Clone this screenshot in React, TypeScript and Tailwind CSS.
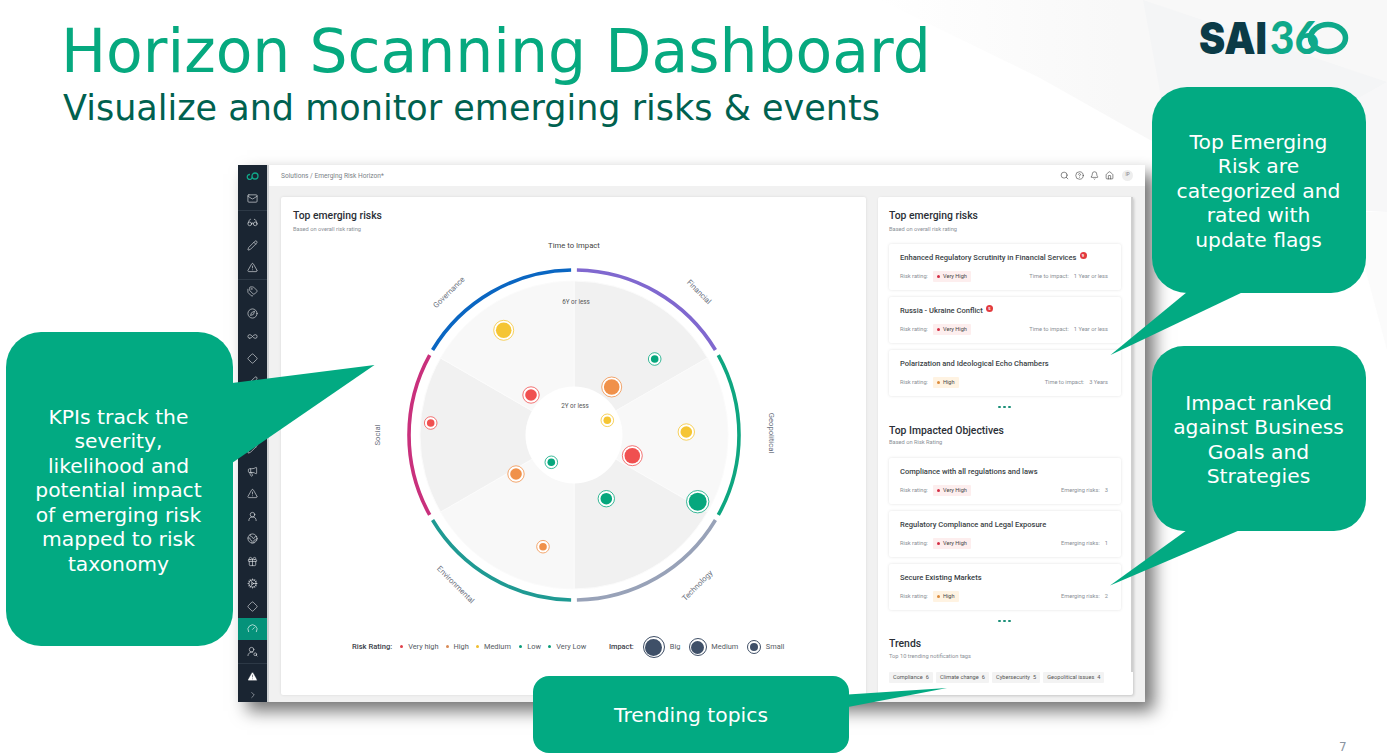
import React from "react";
import {
  Mail, Glasses, Pencil, TriangleAlert, Tags, Compass, Infinity as InfinityIcon, Diamond, Megaphone, UserRound, Earth, Gift, Cog, Gauge, UserRoundSearch, ChevronRight, Search, CircleHelp, Bell, House, PenLine, ShieldCheck, Flag,
} from "lucide-react";

const GREEN = "#02aa82";

function polar(r: number, deg: number) {
  const a = ((deg - 90) * Math.PI) / 180;
  return [210 + r * Math.cos(a), 195 + r * Math.sin(a)];
}
function arc(r: number, a: number, b: number) {
  const [x1, y1] = polar(r, a);
  const [x2, y2] = polar(r, b);
  return `M${x1} ${y1}A${r} ${r} 0 0 1 ${x2} ${y2}`;
}
function sector(r: number, a: number, b: number) {
  const [x1, y1] = polar(r, a);
  const [x2, y2] = polar(r, b);
  return `M210 195L${x1} ${y1}A${r} ${r} 0 0 1 ${x2} ${y2}Z`;
}

const rings = [
  { a: 1, b: 59, c: "#8068cf" },
  { a: 61, b: 119, c: "#0ea680" },
  { a: 121, b: 179, c: "#98a2b8" },
  { a: 181, b: 239, c: "#1f9a93" },
  { a: 241, b: 299, c: "#c9307c" },
  { a: 301, b: 359, c: "#0a66c2" },
];
const RED = "#f05050";
const ORANGE = "#f0914a";
const YELLOW = "#f5c533";
const TEAL = "#06a77d";
const dots = [
  { x: 502.7, y: 330.3, r: 10, c: 7.8, f: YELLOW },
  { x: 653.7, y: 359, r: 6.3, c: 3.8, f: TEAL },
  { x: 610.7, y: 387, r: 10, c: 7.8, f: ORANGE },
  { x: 530, y: 395, r: 8.2, c: 5.8, f: RED },
  { x: 606.3, y: 420.3, r: 6.3, c: 3.8, f: YELLOW },
  { x: 685.3, y: 432, r: 8.2, c: 5.8, f: YELLOW },
  { x: 429.7, y: 423, r: 6.3, c: 3.8, f: RED },
  { x: 631.3, y: 455.7, r: 10, c: 7.8, f: RED },
  { x: 515, y: 474, r: 8.2, c: 5.8, f: ORANGE },
  { x: 550.3, y: 462.3, r: 6.3, c: 3.8, f: TEAL },
  { x: 605.3, y: 498.7, r: 8.2, c: 5.8, f: TEAL },
  { x: 696.7, y: 501.7, r: 11.2, c: 9, f: TEAL },
  { x: 542, y: 546.7, r: 6.3, c: 3.8, f: ORANGE },
];
const labels = [
  { t: "Governance", x: 448.3, y: 292.7, rot: -45 },
  { t: "Financial", x: 697.7, y: 292.3, rot: 45 },
  { t: "Geopolitical", x: 770, y: 433, rot: 90 },
  { t: "Technology", x: 696.7, y: 586, rot: -45 },
  { t: "Environmental", x: 454.3, y: 585, rot: 45 },
  { t: "Social", x: 377, y: 435, rot: -90 },
];

function Wheel() {
  return (
    <svg width="420" height="390" viewBox="0 0 420 390" className="mx-auto block shrink-0" style={{ fontFamily: "Roboto, sans-serif" }}>
      <text x="210" y="8" textAnchor="middle" fontSize="7.7" fill="#444">Time to Impact</text>
      {rings.map((s, i) => (
        <path key={"s" + i} d={sector(154, s.a - 1, s.b + 1)} fill={i % 2 === 0 ? "#f1f1f1" : "#f8f8f8"} stroke="#fbfbfb" strokeWidth="1" />
      ))}
      <circle cx="210" cy="195" r="48.5" fill="#ffffff" />
      {rings.map((s) => (
        <path key={s.c} d={arc(165, s.a, s.b)} fill="none" stroke={s.c} strokeWidth="3.6" />
      ))}
      <text x="212" y="63.5" textAnchor="middle" fontSize="6.3" fill="#555">6Y or less</text>
      <text x="211" y="167.5" textAnchor="middle" fontSize="6.3" fill="#555">2Y or less</text>
      {labels.map((l) => (
        <text key={l.t} transform={`translate(${l.x - 363} ${l.y - 240}) rotate(${l.rot})`} textAnchor="middle" dominantBaseline="middle" fontSize="7.7" fill="#6b7280">{l.t}</text>
      ))}
      {dots.map((d, i) => (
        <g key={i}>
          <circle cx={d.x - 363} cy={d.y - 240} r={d.r} fill="#fff" stroke={d.f} strokeWidth="0.8" />
          <circle cx={d.x - 363} cy={d.y - 240} r={d.c} fill={d.f} />
        </g>
      ))}
    </svg>
  );
}

function LegendDot({ color, label, cls }: { color: string; label: string; cls: string }) {
  return (
    <span className={`flex items-center gap-[4.8px] ${cls}`}>
      <span className="h-[3px] w-[3px] rounded-full" style={{ background: color }} />
      <span>{label}</span>
    </span>
  );
}

function ImpactDot({ outer, inner }: { outer: number; inner: number }) {
  return (
    <span className="flex items-center justify-center rounded-full border border-[#3f4f66] bg-white" style={{ width: outer, height: outer }}>
      <span className="block rounded-full bg-[#3f5068]" style={{ width: inner, height: inner }} />
    </span>
  );
}

function Legend() {
  return (
    <div className="mt-[6px] flex h-[22px] items-center pl-[71px] text-[7.4px] text-[#555b63]">
      <span className="mr-[8px] text-[7.6px] font-medium text-[#3c4149]">Risk Rating:</span>
      <LegendDot color="#e0404a" label="Very high" cls="mr-[7px]" />
      <LegendDot color="#d98a55" label="High" cls="mr-[7.5px]" />
      <LegendDot color="#f0bd2e" label="Medium" cls="mr-[8.5px]" />
      <LegendDot color="#0a9c78" label="Low" cls="mr-[7.5px]" />
      <LegendDot color="#0a9c78" label="Very Low" cls="mr-[22.5px]" />
      <span className="mr-[9px] font-medium text-[#3c4149]">Impact:</span>
      <ImpactDot outer={22} inner={17} />
      <span className="ml-[5px] mr-[8.3px]">Big</span>
      <ImpactDot outer={18} inner={13} />
      <span className="ml-[4.7px] mr-[8.5px]">Medium</span>
      <ImpactDot outer={14} inner={8} />
      <span className="ml-[5px]">Small</span>
    </div>
  );
}

function Badge({ level }: { level: "Very High" | "High" }) {
  const vh = level === "Very High";
  return (
    <span className={`flex h-[11px] items-center gap-[3px] rounded-[1px] px-[4px] text-[5.6px] text-[#444] ${vh ? "bg-[#fdeeee]" : "bg-[#fff3e2]"}`}>
      <span className={`h-[3px] w-[3px] rounded-full ${vh ? "bg-[#d42f45]" : "bg-[#dd8c3c]"}`} />
      {level}
    </span>
  );
}

function Row({ title, level, rk, rv, flag }: { title: string; level: "Very High" | "High"; rk: string; rv: string; flag?: string }) {
  return (
    <div className="h-[46px] rounded-[2px] bg-white px-[11px] pt-[9px] shadow-[0_0_3px_rgba(0,0,0,0.12)]">
      <div className="flex h-[9px] items-center text-[7.55px] font-medium leading-[9px] text-[#3a3f46]">
        <span>{title}</span>
        {flag && (
          <span className="mb-[4px] ml-[3px] flex h-[7px] w-[7px] items-center justify-center rounded-full bg-[#e23a3e] text-[4px] font-bold text-white">{flag}</span>
        )}
      </div>
      <div className="mt-[9px] flex h-[11px] items-center pr-[2px] text-[5.7px] text-[#8a8f96]">
        <span className="mr-[5px]">Risk rating:</span>
        <Badge level={level} />
        <span className="ml-auto">{rk}</span>
        <span className="ml-[5px]">{rv}</span>
      </div>
    </div>
  );
}

function More() {
  return (
    <div className="flex h-[22px] items-center justify-center gap-[2.5px] pr-[1px]">
      <span className="h-[2.5px] w-[2.5px] rounded-full bg-[#1b8f78]" />
      <span className="h-[2.5px] w-[2.5px] rounded-full bg-[#1b8f78]" />
      <span className="h-[2.5px] w-[2.5px] rounded-full bg-[#1b8f78]" />
    </div>
  );
}

function Tag({ name, n }: { name: string; n: number }) {
  return (
    <span className="flex h-[11px] items-center gap-[3px] rounded-[1px] bg-[#f3f3f3] px-[4px] text-[5.6px] text-[#555]">
      <span>{name}</span>
      <span>{n}</span>
    </span>
  );
}

function RightPanel() {
  const T = "Time to impact:";
  const E = "Emerging risks:";
  return (
    <div className="relative ml-[11.5px] h-[498px] w-[255px] shrink-0 rounded-[2px] bg-white pl-[11.5px] pr-[11.5px] shadow-[1px_1px_3px_rgba(0,0,0,0.18)]">
      <div className="absolute right-0 top-0 h-[475px] w-[2px] bg-[#cfcfcf]" />
      <div className="h-[47px] pt-[13px]">
        <div className="text-[10.4px] font-medium leading-[11px] text-[#2b2f36]">Top emerging risks</div>
        <div className="mt-[5px] text-[5.7px] leading-[7px] text-[#8a8f96]">Based on overall risk rating</div>
      </div>
      <div className="flex flex-col gap-[7px]">
        <Row title="Enhanced Regulatory Scrutinity in Financial Services" level="Very High" rk={T} rv="1 Year or less" flag="9" />
        <Row title="Russia - Ukraine Conflict" level="Very High" rk={T} rv="1 Year or less" flag="5" />
        <Row title="Polarization and Ideological Echo Chambers" level="High" rk={T} rv="3 Years" />
      </div>
      <More />
      <div className="h-[40px] pt-[7px]">
        <div className="text-[10.4px] font-medium leading-[11px] text-[#2b2f36]">Top Impacted Objectives</div>
        <div className="mt-[3px] text-[5.7px] leading-[7px] text-[#8a8f96]">Based on Risk Rating</div>
      </div>
      <div className="flex flex-col gap-[7px]">
        <Row title="Compliance with all regulations and laws" level="Very High" rk={E} rv="3" />
        <Row title="Regulatory Compliance and Legal Exposure" level="Very High" rk={E} rv="1" />
        <Row title="Secure Existing Markets" level="High" rk={E} rv="2" />
      </div>
      <More />
      <div className="pt-[6px]">
        <div className="text-[10.4px] font-medium leading-[11px] text-[#2b2f36]">Trends</div>
        <div className="mt-[4px] text-[5.7px] leading-[7px] text-[#8a8f96]">Top 10 trending notification tags</div>
      </div>
      <div className="mt-[12px] flex gap-[3.2px]">
        <Tag name="Compliance" n={6} />
        <Tag name="Climate change" n={6} />
        <Tag name="Cybersecurity" n={5} />
        <Tag name="Geopolitical issues" n={4} />
      </div>
    </div>
  );
}

const navA = [Glasses, Pencil, TriangleAlert];
const navB = [Tags, Compass, InfinityIcon, Diamond, PenLine, ShieldCheck, Flag, Pencil, Megaphone, TriangleAlert, UserRound, Earth, Gift, Cog, Diamond];

function SideIcon({ I, active }: { I: React.ComponentType<any>; active?: boolean }) {
  return (
    <div className={`flex h-[22.5px] items-center justify-center ${active ? "bg-[#05927a]" : ""}`}>
      <I size={11} strokeWidth={1.4} color={active ? "#ffffff" : "#dfe3e6"} />
    </div>
  );
}

function Sidebar() {
  return (
    <div className="flex w-[29px] shrink-0 flex-col bg-[#1a2532]">
      <div className="flex h-[22px] items-center justify-center">
        <svg width="13" height="8" viewBox="0 0 26 16" fill="none" stroke="#10a98a" strokeWidth="2.6">
          <circle cx="18" cy="8" r="6" />
          <path d="M12.5 9.5A5 5 0 1 1 8 5" />
        </svg>
      </div>
      <SideIcon I={Mail} />
      <div className="h-px bg-[#2d3946]" />
      <div className="pt-[1px]">{navA.map((I, i) => <SideIcon key={i} I={I} />)}</div>
      <div className="h-px bg-[#2d3946]" />
      <div>{navB.map((I, i) => <SideIcon key={i} I={I} />)}</div>
      <SideIcon I={Gauge} active />
      <SideIcon I={UserRoundSearch} />
      <div className="h-px bg-[#2d3946]" />
      <div className="flex h-[24px] items-center justify-center pt-[2px]">
        <TriangleAlert size={11} strokeWidth={1.2} color="#1a2532" fill="#ffffff" />
      </div>
      <div className="flex flex-1 items-center justify-center">
        <ChevronRight size={10} strokeWidth={1.4} color="#cbd0d5" />
      </div>
    </div>
  );
}

function Window() {
  return (
    <div className="ml-[238px] flex h-[537px] w-[907px] bg-[#f1f1f1] shadow-[9px_9px_16px_rgba(0,0,0,0.55)]" style={{ fontFamily: "Roboto, sans-serif" }}>
      <Sidebar />
      <div className="flex min-w-0 flex-1 flex-col border-l-2 border-[#cfd2d4]">
        <div className="flex h-[21px] shrink-0 items-center bg-white pl-[12px] pr-[12px] text-[6.6px] text-[#7a7f86]">
          <span className="mt-[2px]">Solutions / Emerging Risk Horizon*</span>
          <div className="ml-auto flex items-center gap-[6px] text-[#333]">
            <Search size={9} strokeWidth={1.5} />
            <CircleHelp size={9} strokeWidth={1.5} />
            <Bell size={9} strokeWidth={1.5} />
            <House size={9} strokeWidth={1.5} />
            <span className="ml-[2px] flex h-[11px] w-[11px] items-center justify-center rounded-full bg-[#eeeeee] text-[4.5px] text-[#777]">IP</span>
          </div>
        </div>
        <div className="flex pl-[12px] pt-[11px]">
          <div className="h-[498px] w-[585px] shrink-0 rounded-[2px] bg-white shadow-[0_0_3px_rgba(0,0,0,0.1)]">
            <div className="h-[43px] pl-[12px] pt-[13px]">
              <div className="text-[10.4px] font-medium leading-[11px] text-[#2b2f36]">Top emerging risks</div>
              <div className="mt-[5px] text-[5.7px] leading-[7px] text-[#8a8f96]">Based on overall risk rating</div>
            </div>
            <Wheel />
            <Legend />
          </div>
          <RightPanel />
        </div>
      </div>
    </div>
  );
}

function Logo() {
  return (
    <svg width="150" height="60" viewBox="0 0 150 60" className="mr-[38px] mt-[5px] shrink-0">
      <text x="0" y="49" fontFamily="Inter, sans-serif" fontWeight="900" fontSize="44" textLength="68" lengthAdjust="spacingAndGlyphs" fill="#0b3b47">SAI</text>
      <text x="71" y="49" fontFamily="Lato, sans-serif" fontWeight="900" fontSize="45" textLength="49" lengthAdjust="spacingAndGlyphs" fill="#0fa98a">36</text>
      <ellipse cx="129" cy="33" rx="17.5" ry="13.5" fill="none" stroke="#0fa98a" strokeWidth="5.5" />
    </svg>
  );
}

function Callout({ cls, children }: { cls: string; children: React.ReactNode }) {
  return (
    <div className={`absolute flex items-center justify-center bg-[#02aa82] text-center text-[20.3px] leading-[24.5px] text-white ${cls}`}>
      <div>{children}</div>
    </div>
  );
}

export default function App() {
  return (
    <div className="relative h-[753px] w-[1387px] overflow-hidden bg-white" style={{ fontFamily: '"DejaVu Sans", sans-serif' }}>
      <svg className="absolute left-0 top-0" width="1387" height="753" viewBox="0 0 1387 753">
        <defs>
          <linearGradient id="fade" x1="880" y1="0" x2="1120" y2="0" gradientUnits="userSpaceOnUse">
            <stop offset="0" stopColor="#ffffff" />
            <stop offset="1" stopColor="#f8f8f8" />
          </linearGradient>
        </defs>
        <polygon points="880,0 1387,0 1387,212 1150,140 1040,78" fill="url(#fade)" />
        <polygon points="1143,0 1387,82 1180,200" fill="#f4f5f6" />
        <polygon points="1387,82 1180,200 1387,212" fill="#f7f7f8" />
        <polygon points="1350,212 1387,212 1387,350" fill="#fbfbfb" />
      </svg>

      <div className="relative flex h-[165px] items-start justify-between">
        <div className="pl-[63px]">
          <h1 className="ml-[-2px] pt-[11px] text-[60px] leading-[80px] text-[#06a97f]">Horizon Scanning Dashboard</h1>
          <h2 className="mt-[-3px] text-[35px] leading-[40px] text-[#00614f]">Visualize and monitor emerging risks &amp; events</h2>
        </div>
        <Logo />
      </div>

      <div className="relative">
        <Window />
      </div>

      <div className="absolute left-[1339px] top-[741px] text-[12px] leading-[12px] text-[#8b95a1]">7</div>

      <svg className="absolute left-0 top-0" width="1387" height="753" viewBox="0 0 1387 753" fill={GREEN}>
        <polygon points="232,383 374.5,365 232,463" />
        <polygon points="1187,292 1243,292 1110.5,355" />
        <polygon points="1187,530 1240,530 1110,585.5" />
        <polygon points="848,694.5 947,688 848,707" />
      </svg>

      <Callout cls="left-[6px] top-[332px] h-[314px] w-[227px] rounded-[35px] pt-[3px] pr-[2px]">
        KPIs track the<br />severity,<br />likelihood and<br />potential impact<br />of emerging risk<br />mapped to risk<br />taxonomy
      </Callout>
      <Callout cls="left-[1152px] top-[87px] h-[206px] w-[214px] rounded-[35px] pt-[2px] pr-[1px]">
        Top Emerging<br />Risk are<br />categorized and<br />rated with<br />update flags
      </Callout>
      <Callout cls="left-[1152px] top-[346px] h-[185px] w-[214px] rounded-[32px] pt-[2px] pr-[1px]">
        Impact ranked<br />against Business<br />Goals and<br />Strategies
      </Callout>
      <Callout cls="left-[533px] top-[676px] h-[77px] w-[316px] rounded-[16px] pt-[1px]">
        Trending topics
      </Callout>
    </div>
  );
}
